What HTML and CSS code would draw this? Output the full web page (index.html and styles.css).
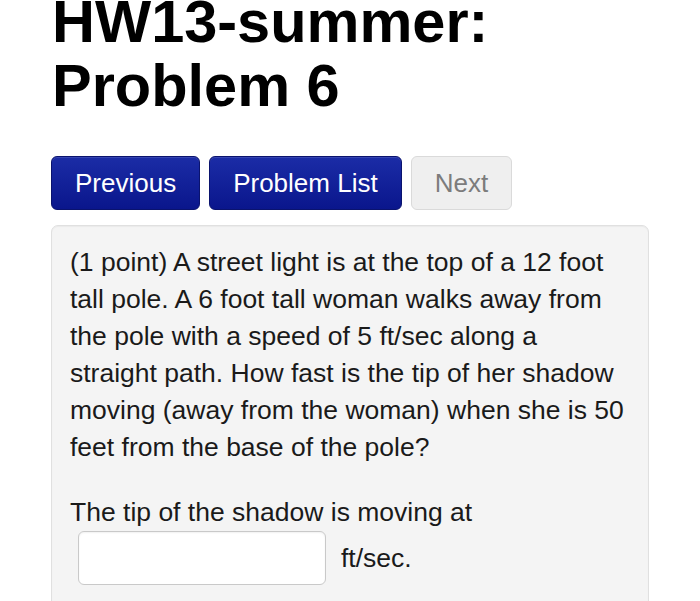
FILE: index.html
```html
<!DOCTYPE html>
<html lang="en">
<head>
<meta charset="utf-8">
<title>HW13-summer: Problem 6</title>
<link rel="stylesheet" href="styles.css">
</head>
<body>
<div class="page">
  <h1 class="title">HW13-summer:<br>Problem 6</h1>

  <nav class="nav">
    <a class="btn btn-primary" href="#">Previous</a>
    <a class="btn btn-primary" href="#">Problem List</a>
    <span class="btn btn-disabled">Next</span>
  </nav>

  <div class="problem">
    <p class="statement">(1 point) A street light is at the top of a 12 foot tall pole. A 6 foot tall woman walks away from the pole with a speed of 5 ft/sec along a straight path. How fast is the tip of her shadow moving (away from the woman) when she is 50 feet from the base of the pole?</p>
    <p class="question">The tip of the shadow is moving at</p>
    <div class="answer">
      <input class="answer-input" type="text" aria-label="answer">
      <span class="unit">ft/sec.</span>
    </div>
  </div>
</div>
</body>
</html>
```

FILE: styles.css
```css
html, body {
  margin: 0;
  padding: 0;
  background: #ffffff;
}

body {
  font-family: "Liberation Sans", Arial, Helvetica, sans-serif;
  color: #1a1a1a;
  overflow: hidden;
}

.page {
  padding: 0 51px;
}

.title {
  margin: -10px 0 0 1px;
  font-size: 59.5px;
  line-height: 64px;
  font-weight: bold;
  color: #000;
}

.nav {
  display: flex;
  gap: 9px;
  margin-top: 38px;
}

.btn {
  display: inline-block;
  font-size: 26px;
  line-height: 36px;
  padding: 8px 23px;
  border: 1px solid transparent;
  border-radius: 6px;
  text-decoration: none;
}

.btn-primary {
  color: #ffffff;
  background: linear-gradient(#1b2ca6, #0a168c);
  border-color: #0a136e;
  box-shadow: inset 0 1px 0 rgba(255, 255, 255, 0.12);
}

.btn-disabled {
  color: #7c7c7c;
  background: #efefef;
  border-color: #dadada;
}

.problem {
  margin-top: 15px;
  background: #f4f4f4;
  border: 1px solid #e0e0e0;
  border-radius: 7px;
  box-shadow: inset 0 1px 1px rgba(0, 0, 0, 0.04);
  padding: 18px 23px 30px 18px;
  font-size: 26.5px;
  line-height: 37px;
}

.statement {
  margin: 0;
}

.question {
  margin: 28px 0 0;
}

.answer {
  display: flex;
  align-items: center;
  gap: 15px;
}

.answer-input {
  box-sizing: border-box;
  width: 248px;
  height: 54px;
  margin-left: 8px;
  border: 1px solid #c9c9c9;
  border-radius: 6px;
  background: #ffffff;
  box-shadow: inset 0 1px 2px rgba(0, 0, 0, 0.06);
  font: inherit;
  padding: 0 10px;
}
```
